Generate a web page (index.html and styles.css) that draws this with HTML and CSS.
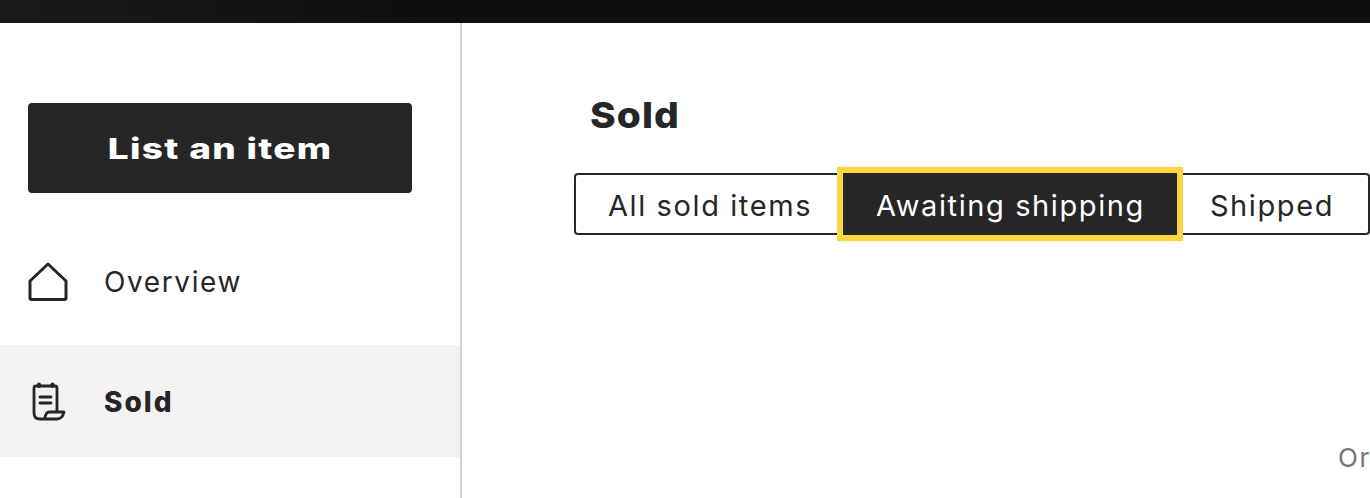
FILE: index.html
```html
<!DOCTYPE html>
<html lang="en">
<head>
    <meta charset="UTF-8">
    <title>Sold</title>
    <link rel="stylesheet" href="styles.css">
</head>
<body>
    <div class="topbar"></div>
    <div class="layout">
        <aside class="sidebar">
            <a class="list-btn"><span class="wide">List an item</span></a>
            <nav class="nav">
                <a class="nav-item">
                    <svg class="nav-icon" viewBox="0 0 48 48" fill="none" stroke="#262626" stroke-width="3" stroke-linejoin="round" stroke-linecap="round">
                        <path d="M6 23 24 6 42 23V40Q42 41.500 40.500 41.500H7.500Q6 41.500 6 40Z"/>
                    </svg>
                    <span>Overview</span>
                </a>
                <a class="nav-item active">
                    <svg class="nav-icon" viewBox="0 0 48 48" fill="none" stroke="#262626" stroke-width="2.800" stroke-linejoin="round" stroke-linecap="round">
                        <path d="M33 34V11Q33 9 31 9H12Q10 9 10 11V36Q10 42 16 42H33Q38.500 42 40 35H25Q22 35 20.500 42"/>
                        <path d="M15 7.500V9M28.500 7.500V9" stroke-width="4"/>
                        <path d="M16 20H27M16 26H27"/>
                    </svg>
                    <span>Sold</span>
                </a>
            </nav>
        </aside>
        <main class="main">
            <h1>Sold</h1>
            <div class="tabs">
                <button class="tab">All sold items</button>
                <button class="tab active">Awaiting shipping</button>
                <button class="tab">Shipped</button>
            </div>
            <p class="note">Orders</p>
        </main>
    </div>
</body>
</html>
```

FILE: styles.css
```css
:root { --ink: #262626; --yellow: #fcd63f; --line: #d2d2d2; --hover: #f2f2f2; --muted: #757575; }
html, body { height: 100%; }
body { margin: 0; font-family: Inter, "Liberation Sans", sans-serif; color: var(--ink); background: white; overflow: hidden; }
.topbar { height: 23px; background: linear-gradient(90deg, #1a1a1a, #0f0f0f 30%, #0f0f0f); }
.layout { display: flex; height: 475px; }
.sidebar { width: 460px; flex: none; border-right: 2px solid var(--line); padding-top: 80px; }
.list-btn { display: flex; align-items: center; justify-content: center; margin: 0 48px 0 28px; height: 90px; background: var(--ink); color: white; border-radius: 4px; font-size: 28px; font-weight: 800; letter-spacing: 1px; }
.wide { display: inline-block; padding-top: 2px; transform: scaleX(1.32); }
.nav { margin-top: 33px; display: flex; flex-direction: column; gap: 7px; }
.nav-item { display: flex; align-items: center; gap: 32px; height: 112px; padding-left: 24px; font-size: 28px; letter-spacing: 1.6px; }
.nav-item.active { background: var(--hover); font-weight: 800; letter-spacing: 2px; }
.nav-item.active span { padding-top: 2px; }
.nav-icon { width: 48px; height: 48px; flex: none; }
.main { flex: 1; min-width: 0; overflow: hidden; padding-left: 112px; white-space: nowrap; }
h1 { margin: 70px 0 0 16px; font-size: 36px; line-height: 44px; font-weight: 800; letter-spacing: 1px; transform: scaleX(1.08); transform-origin: left; }
.tabs { display: flex; margin-top: 36px; width: 796px; height: 62px; box-sizing: border-box; border: 2px solid var(--ink); border-radius: 4px; }
.tab { font: inherit; font-size: 29px; letter-spacing: 1.6px; color: var(--ink); background: none; border: none; padding: 2px 31px 0 32px; white-space: nowrap; }
.tab.active { margin: -2px 0; padding: 2px 32px 0 33px; background: var(--ink); color: white; outline: 6px solid var(--yellow); }
.tab.active + .tab { padding-left: 33px; }
.note { margin: 207px 0 0 764px; font-size: 26px; letter-spacing: 1.5px; color: var(--muted); line-height: 32px; }
```
